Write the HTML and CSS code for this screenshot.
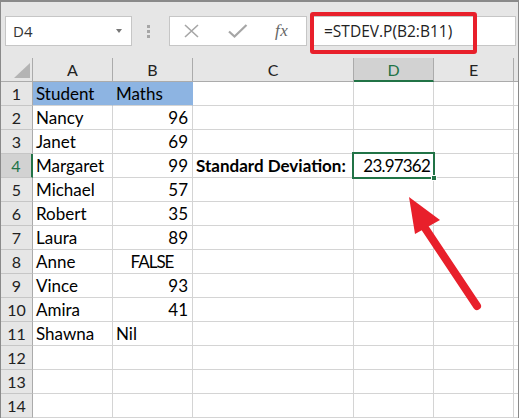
FILE: index.html
```html
<!DOCTYPE html>
<html>
<head>
<meta charset="utf-8">
<link rel="stylesheet" href="styles.css">
</head>
<body>
<div class="frame">
  <div class="topbar">
    <div class="namebox"><span class="name">D4</span><span class="dd"></span></div>
    <div class="grip"><i></i><i></i><i></i></div>
    <div class="buttons">
      <svg class="ico" width="18" height="14" viewBox="0 0 18 14"><path d="M2 1 L15 13 M15 1 L2 13" stroke="#a6a6a6" stroke-width="1.6" fill="none"/></svg>
      <svg class="ico" width="20" height="14" viewBox="0 0 20 14"><path d="M1 7.5 L6.5 12.5 L18.5 1" stroke="#a6a6a6" stroke-width="2.2" fill="none"/></svg>
      <span class="fx">fx</span>
    </div>
    <div class="formula">=STDEV.P(B2:B11)</div>
  </div>
  <div class="grid">
    <div class="ch corner"><span class="tri"></span></div>
    <div class="ch">A</div><div class="ch">B</div><div class="ch">C</div><div class="ch sel">D</div><div class="ch">E</div><div class="ch last"></div>

    <div class="rh">1</div><div class="c hl">Student</div><div class="c hl">Maths</div><div class="c"></div><div class="c"></div><div class="c"></div><div class="c last"></div>
    <div class="rh">2</div><div class="c">Nancy</div><div class="c num">96</div><div class="c"></div><div class="c"></div><div class="c"></div><div class="c last"></div>
    <div class="rh">3</div><div class="c">Janet</div><div class="c num">69</div><div class="c"></div><div class="c"></div><div class="c"></div><div class="c last"></div>
    <div class="rh sel">4</div><div class="c">Margaret</div><div class="c num">99</div><div class="c bold">Standard Deviation:</div><div class="c num active">23.97362<span class="outline"></span><span class="handle"></span></div><div class="c"></div><div class="c last"></div>
    <div class="rh">5</div><div class="c">Michael</div><div class="c num">57</div><div class="c"></div><div class="c"></div><div class="c"></div><div class="c last"></div>
    <div class="rh">6</div><div class="c">Robert</div><div class="c num">35</div><div class="c"></div><div class="c"></div><div class="c"></div><div class="c last"></div>
    <div class="rh">7</div><div class="c">Laura</div><div class="c num">89</div><div class="c"></div><div class="c"></div><div class="c"></div><div class="c last"></div>
    <div class="rh">8</div><div class="c">Anne</div><div class="c mid tight">FALSE</div><div class="c"></div><div class="c"></div><div class="c"></div><div class="c last"></div>
    <div class="rh">9</div><div class="c">Vince</div><div class="c num">93</div><div class="c"></div><div class="c"></div><div class="c"></div><div class="c last"></div>
    <div class="rh">10</div><div class="c">Amira</div><div class="c num">41</div><div class="c"></div><div class="c"></div><div class="c"></div><div class="c last"></div>
    <div class="rh">11</div><div class="c">Shawna</div><div class="c">Nil</div><div class="c"></div><div class="c"></div><div class="c"></div><div class="c last"></div>
    <div class="rh">12</div><div class="c"></div><div class="c"></div><div class="c"></div><div class="c"></div><div class="c"></div><div class="c last"></div>
    <div class="rh">13</div><div class="c"></div><div class="c"></div><div class="c"></div><div class="c"></div><div class="c"></div><div class="c last"></div>
    <div class="rh">14</div><div class="c"></div><div class="c"></div><div class="c"></div><div class="c"></div><div class="c"></div><div class="c last"></div>
  </div>
  <div class="redbox"></div>
  <svg class="arrow" width="519" height="418" viewBox="0 0 519 418">
    <line x1="477" y1="306" x2="421" y2="222" stroke="#e8202b" stroke-width="8" stroke-linecap="round"/>
    <polygon points="409,197 440,220 415,234" fill="#e8202b"/>
  </svg>
</div>
</body>
</html>
```
FILE: styles.css
```css
* { box-sizing: border-box; }
body { margin: 0; background: #fff; }
.frame {
  position: relative;
  width: 519px;
  height: 418px;
  border-top: 2px solid #8a8a8a;
  border-left: 1px solid #8a8a8a;
  border-right: 1px solid #8a8a8a;
  overflow: hidden;
  background: #fff;
  font-family: Lato, "Liberation Sans", sans-serif;
}
.topbar {
  height: 56px;
  background: #e6e6e6;
  display: flex;
  align-items: flex-start;
  padding: 14px 2px 0 4px;
}
.namebox {
  width: 127px;
  height: 30px;
  background: #fff;
  border: 1px solid #c6c6c6;
  display: flex;
  align-items: center;
  justify-content: space-between;
  padding: 0 9px 0 7px;
}
.name { font-family: "Open Sans", sans-serif; font-size: 15px; color: #333; }
.dd {
  width: 0; height: 0;
  border-left: 3.5px solid transparent;
  border-right: 3.5px solid transparent;
  border-top: 4px solid #777;
}
.grip {
  width: 37px;
  height: 30px;
  display: flex;
  flex-direction: column;
  align-items: center;
  justify-content: center;
  gap: 2px;
  padding-right: 5px;
}
.grip i { display: block; width: 3px; height: 3px; background: #a6a6a6; }
.buttons {
  width: 138px;
  height: 30px;
  background: #fff;
  border: 1px solid #c6c6c6;
  display: flex;
  align-items: center;
  padding-left: 13px;
  gap: 27px;
}
.ico { display: block; }
.fx {
  font-family: "Liberation Serif", serif;
  font-style: italic;
  font-size: 17px;
  color: #666;
  letter-spacing: 0.5px;
}
.formula {
  flex: 1;
  margin-left: 3px;
  height: 30px;
  background: #fff;
  border: 1px solid #c6c6c6;
  font-family: "Open Sans", sans-serif;
  font-size: 15.5px;
  color: #222;
  line-height: 28px;
  padding-left: 13px;
}
.grid {
  display: grid;
  grid-template-columns: 32px 80px 80px 161px 80px 80px 1fr;
  grid-auto-rows: 24px;
}
.ch, .rh, .c {
  font-size: 17px;
  display: flex;
  align-items: center;
  white-space: nowrap;
}
.ch, .rh { font-size: 16px; }
.ch {
  background: #e6e6e6;
  border-right: 1px solid #ababab;
  border-bottom: 1px solid #ababab;
  justify-content: center;
  color: #222;
}
.ch.sel {
  background: #d2d2d2;
  color: #217346;
  border-bottom: 2px solid #217346;
}
.ch.last { border-right: none; }
.corner { position: relative; }
.tri {
  position: absolute;
  right: 2px;
  bottom: 3px;
  width: 0; height: 0;
  border-left: 16px solid transparent;
  border-bottom: 15px solid #b4b4b4;
}
.rh {
  background: #e6e6e6;
  border-right: 1px solid #ababab;
  border-bottom: 1px solid #c6c6c6;
  justify-content: center;
  color: #222;
}
.rh.sel {
  background: #d2d2d2;
  color: #217346;
  border-right: 2px solid #217346;
}
.c {
  border-right: 1px solid #d4d4d4;
  border-bottom: 1px solid #d4d4d4;
  padding: 0 4px 0 3px;
  color: #000;
}
.c.last { border-right: none; }
.c.hl { background: #8db4e2; border-right-color: #8db4e2; }
.c.num { justify-content: flex-end; }
.c.mid { justify-content: center; }
.c.tight { letter-spacing: -1px; }
.c.bold { font-weight: 700; overflow: visible; }
.active { position: relative; padding-right: 3px; letter-spacing: -0.8px; }
.outline {
  position: absolute;
  inset: -2px;
  border: 2px solid #217346;
}
.handle {
  position: absolute;
  right: -4px;
  bottom: -4px;
  width: 6px;
  height: 6px;
  background: #217346;
  border: 1px solid #fff;
}
.redbox {
  position: absolute;
  left: 309px;
  top: 10px;
  width: 167px;
  height: 42px;
  border: 4px solid #e8202b;
  border-radius: 3px;
}
.arrow {
  position: absolute;
  left: -1px;
  top: -2px;
  pointer-events: none;
}
```
